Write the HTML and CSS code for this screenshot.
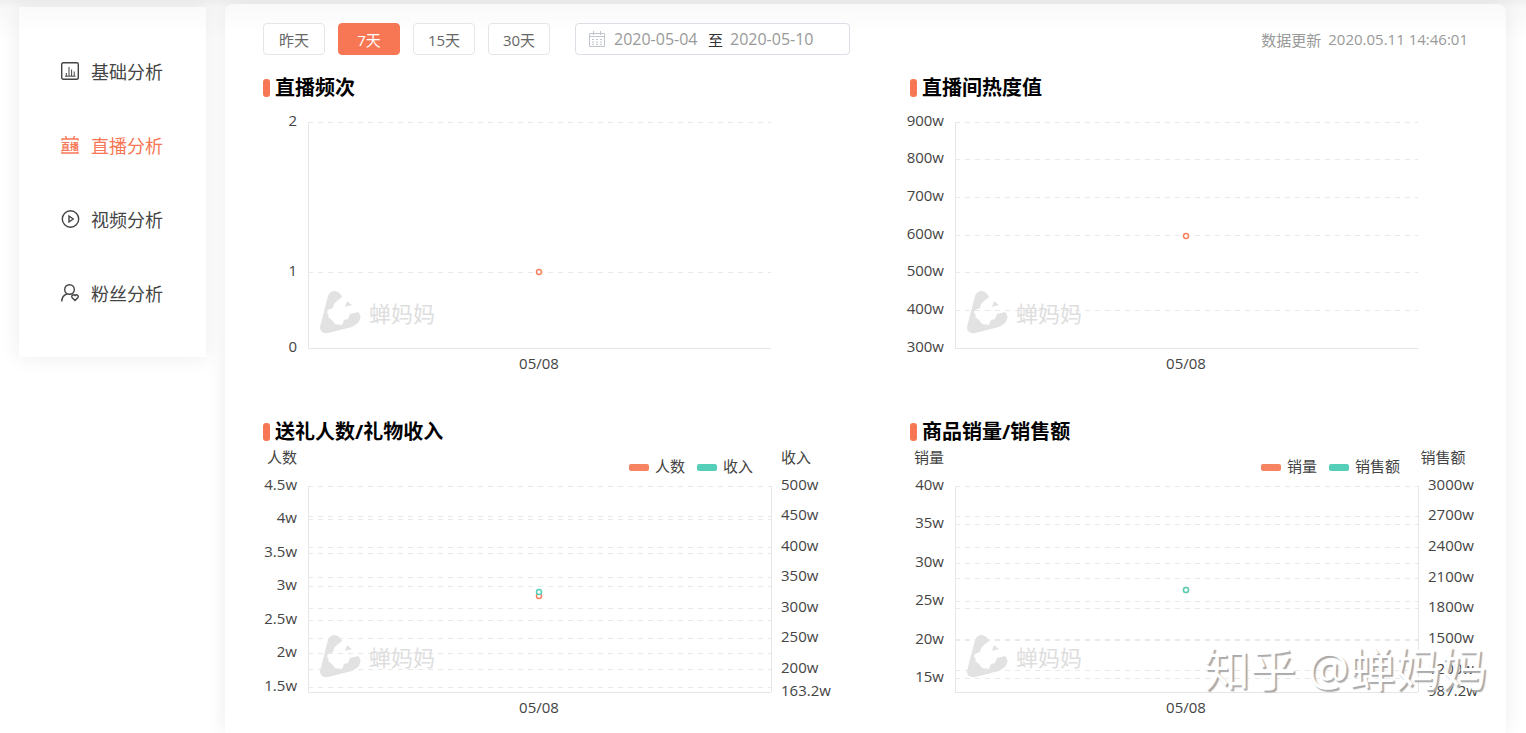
FILE: index.html
```html
<!DOCTYPE html>
<html lang="zh-CN">
  <head>
    <meta charset="UTF-8" />
    <meta name="viewport" content="width=device-width, initial-scale=1.0" />
    <title>直播分析</title>
    <link rel="stylesheet" href="styles.css" />
  </head>
  <body>
    <div class="page">
      <nav class="sidebar">
        <a href="#base" class="nav-item">
          <svg class="nav-icon" viewBox="0 0 18 18">
            <rect x="0.7" y="0.7" width="16.6" height="16.6" rx="1.5" />
            <path class="thin" d="M4 14.2h10.500M5.300 14v-3M8 14V5M10.600 14V7.500M13.200 14V9.500" />
          </svg>
          基础分析
        </a>
        <a href="#live" class="nav-item active">
          <svg class="nav-icon" viewBox="0 0 18 18">
            <path d="M1 4.500V3h16v1.500M6 3L4.300 0M12 3l1.700-3M1 15.500V17h16v-1.500" />
            <text x="9" y="13.500">直播</text>
          </svg>
          直播分析
        </a>
        <a href="#video" class="nav-item">
          <svg class="nav-icon" viewBox="0 0 18 18">
            <circle cx="9.500" cy="9" r="8.200" />
            <path d="M8 6v6l4.200-3z" />
          </svg>
          视频分析
        </a>
        <a href="#fans" class="nav-item">
          <svg class="nav-icon" viewBox="0 0 18 18">
            <circle cx="8.500" cy="5.500" r="4.800" />
            <path d="M0.800 17.500c0-4 2-6.500 5-7.500M14 16.500l-3-3c-1.200-2 1.500-3.800 3-2 1.500-1.800 4.200 0 3 2z" />
          </svg>
          粉丝分析
        </a>
      </nav>

      <main class="panel">
        <div class="toolbar">
          <div class="range">
            <button type="button">昨天</button>
            <button type="button" class="active">7天</button>
            <button type="button">15天</button>
            <button type="button">30天</button>
          </div>
          <div class="date-picker">
            <svg class="calendar" viewBox="0 0 16 16">
              <path d="M0.500 2.500h15v13h-15zM0.500 5.500h15M4.500 0v4M11.500 0v4" />
              <path class="days" d="M3 8.500h10M3 11h10M3 13.300h10" />
            </svg>
            <input type="text" aria-label="开始日期" value="2020-05-04" />
            <span>至</span>
            <input type="text" aria-label="结束日期" value="2020-05-10" />
          </div>
          <div class="updated">
            <span>数据更新</span>
            <time>2020.05.11 14:46:01</time>
          </div>
        </div>

        <div class="charts">
          <section>
            <h2>直播频次</h2>
            <svg class="chart" id="frequency"></svg>
          </section>
          <section>
            <h2>直播间热度值</h2>
            <svg class="chart" id="heat"></svg>
          </section>
          <section>
            <h2>送礼人数/礼物收入</h2>
            <svg class="chart" id="gifts"></svg>
          </section>
          <section>
            <h2>商品销量/销售额</h2>
            <svg class="chart" id="sales"></svg>
          </section>
        </div>

        <div class="stamp">知乎 @蝉妈妈</div>
      </main>
    </div>
    <script src="charts.js"></script>
  </body>
</html>
```
FILE: styles.css
```css
* {
  margin: 0;
  padding: 0;
  box-sizing: border-box;
}

body {
  font-family: "Open Sans", "Noto Sans CJK SC", sans-serif;
  font-size: 15px;
  color: #444;
  background-color: #fff;
}

.page {
  display: flex;
  align-items: flex-start;
  gap: 19px;
  min-height: 100vh;
  padding: 4px 20px 0 19px;
  overflow: hidden;
  background: linear-gradient(#efefef, #f8f8f8 8px, #fff 40px);
}

.sidebar {
  flex: none;
  width: 187px;
  margin-top: 3px;
  padding: 27px 0;
  background: linear-gradient(#fafafa, #fff 30px);
  box-shadow: 0 0 20px rgba(0, 0, 0, 0.08);
}

.nav-item {
  display: flex;
  align-items: center;
  gap: 12px;
  height: 74px;
  padding-left: 42px;
  font-size: 18px;
  color: #444;
  text-decoration: none;
}

.nav-item.active {
  color: #f77754;
}

.nav-icon {
  width: 18px;
  height: 18px;
  fill: none;
  stroke: currentColor;
  stroke-width: 1.4;
  overflow: visible;
}

.nav-icon .thin {
  stroke-width: 1;
}

.nav-icon text {
  font-size: 9px;
  font-weight: bold;
  text-anchor: middle;
  fill: currentColor;
  stroke: none;
}

.panel {
  position: relative;
  flex: 1;
  min-width: 0;
  align-self: stretch;
  padding: 19px 23px 0 38px;
  border-radius: 8px 8px 0 0;
  background: linear-gradient(#f9f9f9, #fff 30px);
  box-shadow: 0 0 20px rgba(0, 0, 0, 0.08);
}

.toolbar {
  display: flex;
  align-items: center;
  gap: 25px;
  padding-right: 15px;
}

.range {
  display: flex;
  gap: 13px;
}

button {
  width: 62px;
  height: 32px;
  border: 1px solid #e6e6e6;
  border-radius: 4px;
  background-color: #fff;
  font: inherit;
  color: #666;
  cursor: pointer;
}

button.active {
  border-color: #f77754;
  background-color: #f77754;
  color: #fff;
}

.date-picker {
  display: flex;
  align-items: center;
  width: 275px;
  height: 32px;
  padding: 0 13px;
  border: 1px solid #dcdfe6;
  border-radius: 4px;
  background-color: #fff;
}

.date-picker input {
  width: 94px;
  border: none;
  outline: none;
  background: none;
  font-family: inherit;
  font-size: 16px;
  color: #999;
}

.date-picker span {
  margin-right: 7px;
  color: #333;
}

.calendar {
  width: 16px;
  height: 16px;
  margin-right: 9px;
  fill: none;
  stroke: #c0c4cc;
}

.calendar .days {
  stroke-dasharray: 2 2;
}

.updated {
  display: flex;
  gap: 7px;
  margin-left: auto;
  color: #999;
}

.charts {
  display: grid;
  grid-template-columns: 1fr 1fr;
  gap: 40px 74px;
  margin-top: 21px;
}

.charts section {
  min-width: 0;
}

h2 {
  display: flex;
  align-items: center;
  gap: 5px;
  font-size: 20px;
  line-height: 24px;
  color: #000;
}

h2::before {
  content: "";
  width: 7px;
  height: 18px;
  border-radius: 3px;
  background-color: #f77754;
}

.chart {
  display: block;
  width: 100%;
  height: 280px;
  overflow: visible;
  fill: #444;
}

.split {
  stroke: #e9e9e9;
  stroke-dasharray: 5 5;
  shape-rendering: crispEdges;
}

.axis {
  stroke: #e6e6e6;
  shape-rendering: crispEdges;
}

.dot {
  fill: #fff;
  stroke-width: 1.5;
}

.logo path {
  fill: #e2e2e2;
}

.logo text {
  font-size: 22px;
  fill: #dedede;
}

.start {
  text-anchor: start;
}

.middle {
  text-anchor: middle;
}

.end {
  text-anchor: end;
}

.stamp {
  position: absolute;
  right: 19px;
  bottom: 35px;
  font-size: 46px;
  line-height: 60px;
  color: #fff;
  text-shadow: 2px 2px 1px #aaa;
  white-space: nowrap;
  pointer-events: none;
}
```
FILE: charts.js
```js
const ORANGE = "#f78361";
const GREEN = "#55cfb7";

// ticks are [value, label]
const charts = {
  frequency: {
    top: 22,
    left: { min: 0, max: 3, ticks: [[3, "2"], [1, "1"], [0, "0"]] },
    points: [{ side: "left", value: 1, color: ORANGE }],
  },
  heat: {
    top: 22,
    left: { min: 300, max: 900, ticks: steps(900, 300, 100) },
    points: [{ side: "left", value: 597, color: ORANGE }],
  },
  gifts: {
    top: 42,
    left: { name: "人数", min: 1.43, max: 4.5, ticks: steps(4.5, 1.5, 0.5) },
    right: {
      name: "收入",
      min: 163.2,
      max: 500,
      ticks: [...steps(500, 200, 50), [163.2, "163.2w"]],
    },
    legend: [["人数", ORANGE], ["收入", GREEN]],
    points: [
      { side: "left", value: 2.86, color: ORANGE },
      { side: "right", value: 326, color: GREEN },
    ],
  },
  sales: {
    top: 42,
    left: { name: "销量", min: 13.3, max: 40, ticks: steps(40, 15, 5) },
    right: {
      name: "销售额",
      min: 987.2,
      max: 3000,
      ticks: [...steps(3000, 1200, 300), [987.2, "987.2w"]],
    },
    legend: [["销量", ORANGE], ["销售额", GREEN]],
    points: [
      { side: "left", value: 26.5, color: ORANGE },
      { side: "right", value: 1979, color: GREEN },
    ],
  },
};

function steps(from, to, step) {
  const ticks = [];
  for (let v = from; v >= to; v -= step) {
    ticks.push([v, v + "w"]);
  }
  return ticks;
}

function text(x, y, anchor, value) {
  return `<text class="${anchor}" x="${x}" y="${y}">${value}</text>`;
}

function line(cls, x1, y1, x2, y2) {
  return `<line class="${cls}" x1="${x1}" y1="${y1}" x2="${x2}" y2="${y2}" />`;
}

function logo(x, y) {
  return `
    <g class="logo" transform="translate(${x} ${y})">
      <path d="M8 5Q10 0 15 0Q20 1 22 6L17 10L14 13L13 17L8 19Q6 22 9 24L8 26L12 29L15 33L22 34L24 29L28 28L30 23L38 21Q43 25 38 32L32 36L8 42Q0 43 0 36Z" />
      <path d="M27 10L32 14L25 16Z" />
      <text x="49" y="31">蝉妈妈</text>
    </g>`;
}

function draw(id) {
  const chart = charts[id];
  const svg = document.getElementById(id);
  const x0 = 45;
  const x1 = svg.clientWidth - 65;
  const bottom = 248;
  const mid = Math.floor((x0 + x1) / 2);
  const scale = (axis, v) =>
    Math.floor(bottom - ((v - axis.min) / (axis.max - axis.min)) * (bottom - chart.top));
  let out = "";

  ["left", "right"].forEach((side) => {
    const axis = chart[side];
    if (!axis) return;
    const isLeft = side === "left";
    const edge = isLeft ? x0 : x1;

    out += line("axis", edge, chart.top, edge, bottom);
    axis.ticks.forEach(([value, label]) => {
      const y = scale(axis, value);
      out += line("split", x0, y, x1, y);
      out += text(isLeft ? edge - 11 : edge + 10, y + 4, isLeft ? "end" : "start", label);
    });
    if (axis.name) {
      out += text(isLeft ? edge - 26 : edge + 25, chart.top - 23, "middle", axis.name);
    }
  });

  out += line("axis", x0, bottom, x1, bottom);
  out += text(mid, bottom + 21, "middle", "05/08");
  out += logo(x0 + 12, bottom - 57);

  let x = x1 - 18;
  [...(chart.legend || [])].reverse().forEach(([name, color]) => {
    x -= name.length * 15;
    out += text(x, chart.top - 14, "start", name);
    out += `<rect x="${x - 26}" y="${chart.top - 22}" width="20" height="7" rx="2" fill="${color}" />`;
    x -= 38;
  });

  chart.points.forEach((p) => {
    out += `<circle class="dot" cx="${mid}" cy="${scale(chart[p.side], p.value)}" r="2.500" stroke="${p.color}" />`;
  });

  svg.innerHTML = out;
}

function drawAll() {
  Object.keys(charts).forEach(draw);
}

drawAll();
window.addEventListener("resize", drawAll);
```
